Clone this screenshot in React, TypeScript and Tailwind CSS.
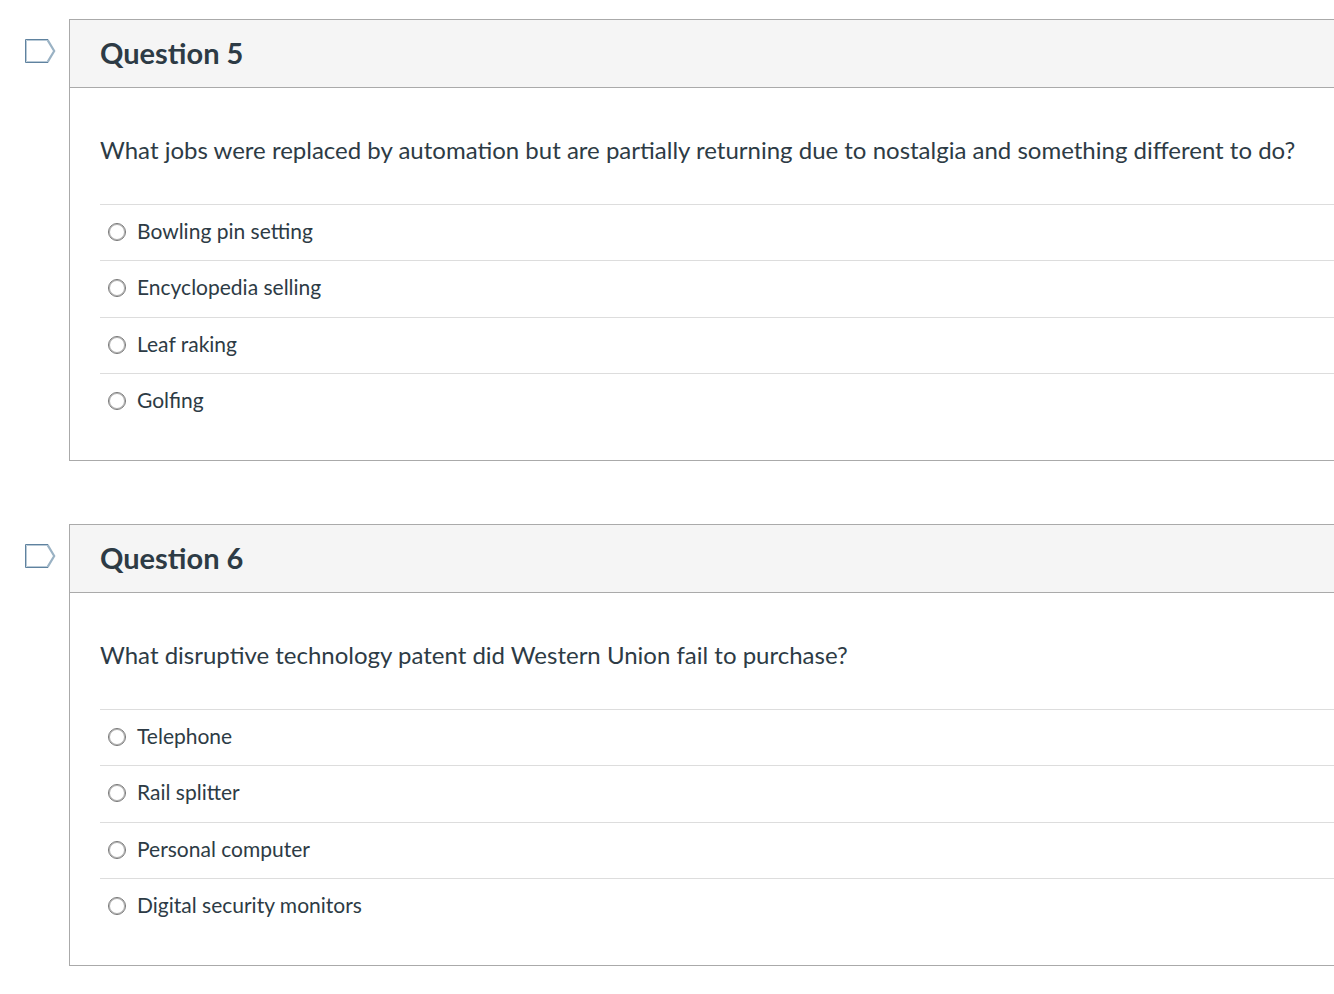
interface Question {
  id: number;
  prompt: string;
  answers: string[];
}

const QUESTIONS: Question[] = [
  {
    id: 5,
    prompt:
      "What jobs were replaced by automation but are partially returning due to nostalgia and something different to do?",
    answers: ["Bowling pin setting", "Encyclopedia selling", "Leaf raking", "Golfing"],
  },
  {
    id: 6,
    prompt: "What disruptive technology patent did Western Union fail to purchase?",
    answers: ["Telephone", "Rail splitter", "Personal computer", "Digital security monitors"],
  },
];

function FlagButton({ id }: { id: number }) {
  return (
    <button type="button" aria-label={`Flag question ${id}`} className="mt-5 h-6 w-8 shrink-0">
      <svg viewBox="0 0 32 24" fill="none" aria-hidden className="h-6 w-8">
        <path d="M22.5 0.9L29.2 12L22.5 23.1" stroke="#9ab2c4" strokeWidth="2.2" />
        <path d="M22.5 1.5H1.5V22.5H22.5" stroke="#b9cad7" strokeWidth="1" />
        <path d="M23 0.5H0.5V23.5H23" stroke="#5f829f" strokeWidth="1" />
      </svg>
    </button>
  );
}

function QuestionCard({ question }: { question: Question }) {
  return (
    <section className="flex items-start gap-3 pl-[25px]">
      <FlagButton id={question.id} />

      <div className="min-w-0 flex-1 border border-r-0 border-[#aaaaaa] pb-[30px]">
        <h2 className="border-b border-[#aaaaaa] bg-[#f5f5f5] pt-[11px] pb-[13px] pl-[30px] text-[29px] leading-[43px] font-bold">
          {`Question ${question.id}`}
        </h2>

        <fieldset className="ml-[30px]">
          <legend className="pt-11 pb-9 text-[24px] leading-9">{question.prompt}</legend>
          {question.answers.map((answer) => (
            <label
              key={answer}
              className="flex h-14 items-center gap-[11px] border-t border-[#dddddd] pb-0.5 pl-2 text-[21px] leading-8 odd:h-[57px]"
            >
              <input
                type="radio"
                name={`question-${question.id}`}
                className="h-[18px] w-[18px] shrink-0 appearance-none rounded-full border border-[#767676] bg-white shadow-[inset_0_0_0_1px_#b4b4b4] checked:border-[5px]"
              />
              <span className="pb-0.5">{answer}</span>
            </label>
          ))}
        </fieldset>
      </div>
    </section>
  );
}

export default function App() {
  return (
    <main className="flex flex-col gap-[63px] overflow-x-hidden bg-white pt-[19px] pb-7 font-[Lato,sans-serif] text-[#2d3b45]">
      {QUESTIONS.map((question) => (
        <QuestionCard key={question.id} question={question} />
      ))}
    </main>
  );
}
